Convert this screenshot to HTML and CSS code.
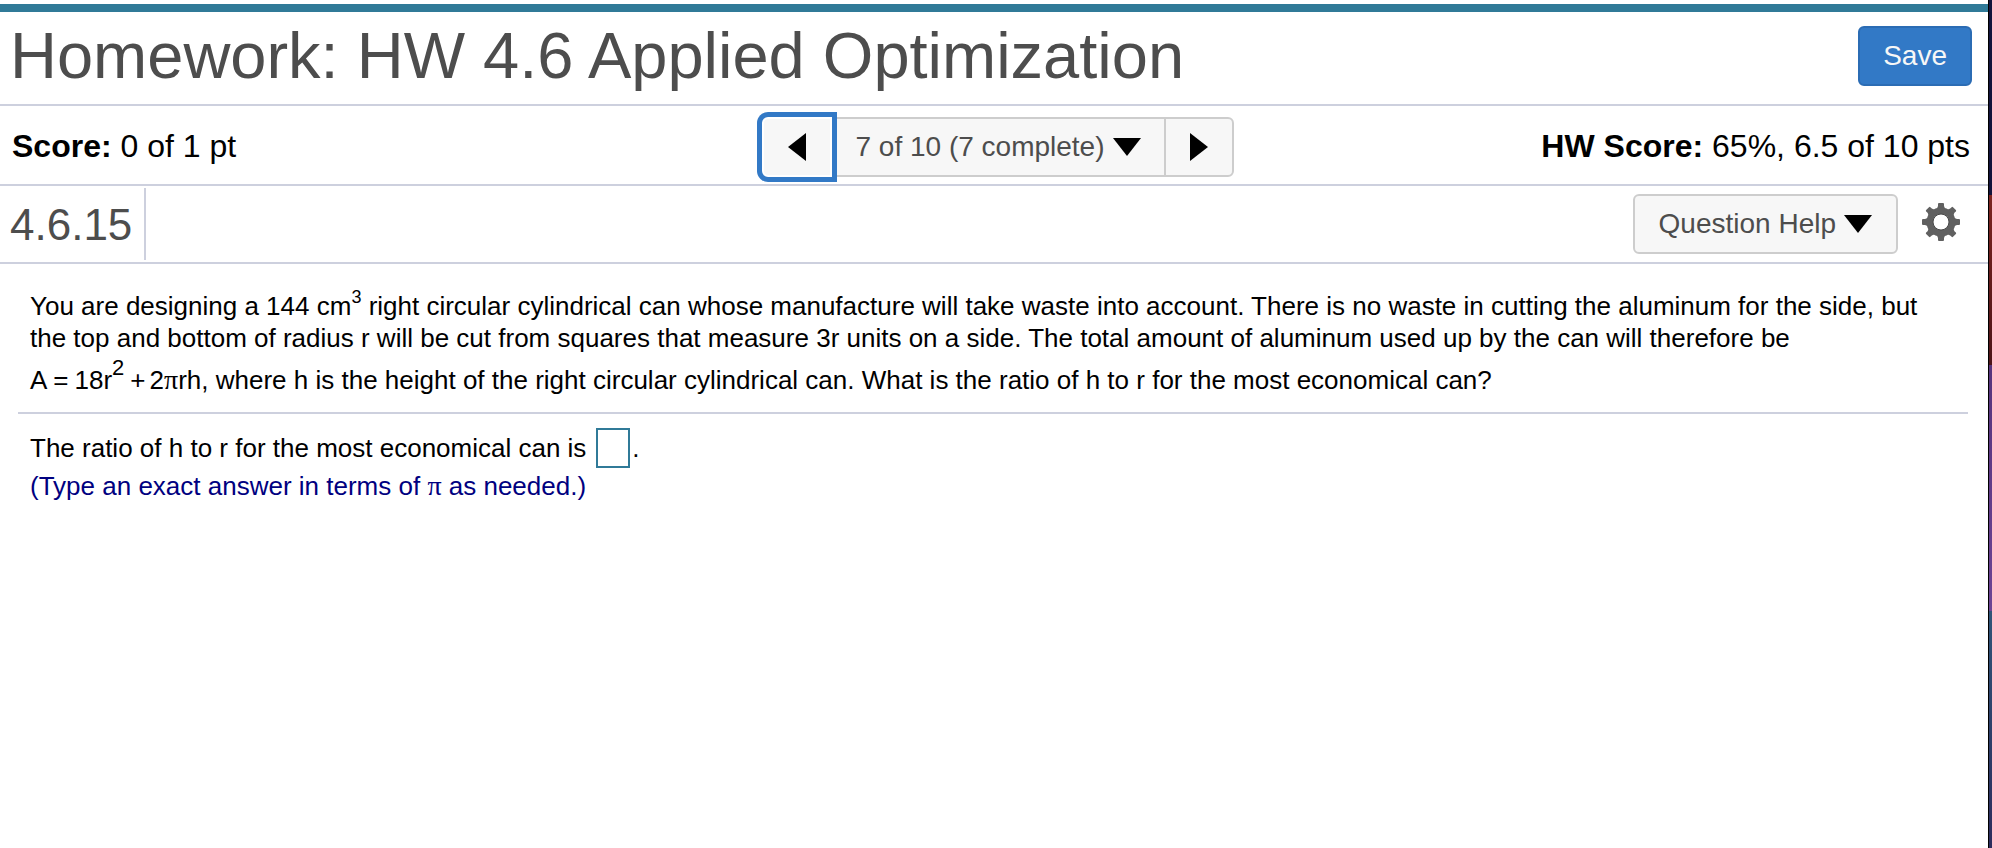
FILE: index.html
```html
<!DOCTYPE html>
<html lang="en">
<head>
	<meta charset="UTF-8">
	<title>Homework: HW 4.6 Applied Optimization</title>
	<link rel="stylesheet" href="styles.css">
</head>
<body>
	<div class="page">
		<header class="title-bar">
			<h1>Homework: HW 4.6 Applied Optimization</h1>
			<button type="button" class="btn btn-save">Save</button>
		</header>

		<div class="score-bar">
			<div class="score"><b>Score:</b> 0 of 1 pt</div>
			<nav class="pager" aria-label="Questions">
				<button type="button" class="btn prev" aria-label="Previous question">
					<svg width="18" height="28" viewBox="0 0 18 28"><path d="M18 0v28L0 14z"/></svg>
				</button>
				<button type="button" class="btn current">7 of 10 (7 complete)
					<svg width="28" height="18" viewBox="0 0 28 18"><path d="M0 0h28L14 18z"/></svg>
				</button>
				<button type="button" class="btn next" aria-label="Next question">
					<svg width="18" height="28" viewBox="0 0 18 28"><path d="M0 0v28l18-14z"/></svg>
				</button>
			</nav>
			<div class="score hw-score"><b>HW Score:</b> 65%, 6.5 of 10 pts</div>
		</div>

		<div class="question-bar">
			<h2>4.6.15</h2>
			<div class="tools">
				<button type="button" class="btn help">Question Help
					<svg width="28" height="18" viewBox="0 0 28 18"><path d="M0 0h28L14 18z"/></svg>
				</button>
				<button type="button" class="settings" aria-label="Settings">
					<svg width="38" height="38" viewBox="-19 -19 38 38">
						<defs>
							<path id="tooth" d="M-5 -11L-3 -16V-18Q-3 -19 -2 -19H2Q3 -19 3 -18V-16L5 -11z"/>
						</defs>
						<g fill="#606060">
							<use href="#tooth"/>
							<use href="#tooth" transform="rotate(45)"/>
							<use href="#tooth" transform="rotate(90)"/>
							<use href="#tooth" transform="rotate(135)"/>
							<use href="#tooth" transform="rotate(180)"/>
							<use href="#tooth" transform="rotate(225)"/>
							<use href="#tooth" transform="rotate(270)"/>
							<use href="#tooth" transform="rotate(315)"/>
						</g>
						<circle r="11" fill="none" stroke="#606060" stroke-width="7"/>
						<circle r="8" fill="#fff" stroke="#484848"/>
					</svg>
				</button>
			</div>
		</div>

		<main class="content">
			<p class="question">You are designing a 144 cm<sup>3</sup> right circular cylindrical can whose manufacture will take waste into account. There is no waste in cutting the aluminum for the side, but the top and bottom of radius r will be cut from squares that measure 3r units on a side. The total amount of aluminum used up by the can will therefore be<br>
			<span class="math">A<i class="op">=</i>18r<sup>2</sup><i class="op plus">+</i>2<i class="pi">π</i>rh</span>, where h is the height of the right circular cylindrical can. What is the ratio of h to r for the most economical can?</p>
			<hr>
			<div class="answer">
				<label for="ratio">The ratio of h to r for the most economical can is</label>
				<input type="text" id="ratio"><span>.</span>
			</div>
			<p class="hint">(Type an exact answer in terms of <i class="pi">π</i> as needed.)</p>
		</main>
	</div>
	<div class="desktop-edge"></div>
</body>
</html>
```

FILE: styles.css
```css
* {
	box-sizing: border-box;
}
body {
	margin: 0;
	display: flex;
	min-height: 100vh;
	background: #fff;
	color: #000;
	font-family: "Liberation Sans", Arial, sans-serif;
}
.page {
	flex: 1;
	padding-top: 4px;
}
/* strip of wallpaper beside the window */
.desktop-edge {
	width: 4px;
	border-left: 1px solid #000;
	background: linear-gradient(#12143c 0, #12123a 23%, #7c2420 23%, #4c1418 43%, #56347c 43%, #6c4494 72%, #305478 72%, #2c2c5c 100%);
}

h1, h2, p {
	margin: 0;
	font-weight: normal;
}
.title-bar, .score-bar, .question-bar {
	display: flex;
	align-items: center;
	justify-content: space-between;
	border-bottom: 2px solid #cdd0de;
}
.title-bar {
	height: 102px;
	padding: 0 16px 4px 10px;
	border-top: 8px solid #307a98;
}
h1 {
	color: #4d4d4d;
	font-size: 65px;
	line-height: 72px;
}

.btn {
	height: 60px;
	border: 2px solid #cdcdcd;
	border-radius: 6px;
	background: #f7f7f7;
	color: #4d4d4d;
	font-family: inherit;
	font-size: 28px;
	line-height: 32px;
}
.btn svg {
	fill: #000;
}
.btn-save {
	padding: 0 23px;
	border-color: #2b6cb4;
	background: #3279c6;
	color: #f7f7f7;
}

.score-bar {
	display: grid;
	grid-template-columns: 1fr auto 1fr;
	height: 80px;
	padding: 3px 18px 0 12px;
}
.score {
	font-size: 32px;
}
.hw-score {
	text-align: right;
}
.pager {
	display: flex;
	margin-left: 14px;
}
.pager .btn {
	display: flex;
	align-items: center;
	justify-content: center;
}
.pager .prev {
	width: 70px;
	border-color: #fff;
	border-radius: 6px 0 0 6px;
	outline: 0;
	box-shadow: 0 0 0 5px #3279c6;
	z-index: 1;
}
.pager .current {
	gap: 8px;
	padding: 0 23px;
	border-width: 2px 0;
	border-radius: 0;
}
.pager .next {
	width: 70px;
	border-radius: 0 6px 6px 0;
}

.question-bar {
	height: 78px;
	padding-right: 24px;
}
h2 {
	height: 72px;
	padding: 0 12px 0 10px;
	border-right: 2px solid #cdd0de;
	color: #4d4d4d;
	font-size: 44px;
	line-height: 74px;
}
.tools {
	display: flex;
	align-items: center;
	gap: 24px;
}
.help {
	display: flex;
	align-items: center;
	gap: 8px;
	padding: 0 24px;
}
.settings {
	display: flex;
	padding: 0 4px 4px 0;
	border: 0;
	background: none;
}

.content {
	padding: 26px 20px 0 18px;
	font-size: 26px;
	line-height: 32px;
}
.question, .answer, .hint {
	padding: 0 12px;
}
sup {
	position: relative;
	bottom: 12px;
	font-size: 18px;
	line-height: 1;
	vertical-align: baseline;
}
.math {
	display: inline-block;
	padding-top: 10px;
}
.math sup {
	bottom: 14px;
	font-size: 22px;
}
.op {
	margin: 0 6px;
	font-style: normal;
}
.plus {
	margin-right: 4px;
}
.pi {
	font-family: "Liberation Serif", "Times New Roman", serif;
	font-size: 28px;
	font-style: normal;
	line-height: 1;
}
hr {
	margin: 16px 0 14px;
	border: 0;
	border-top: 2px solid #cdd0de;
}
.answer {
	display: flex;
	align-items: center;
}
.answer input {
	width: 34px;
	height: 40px;
	margin: 0 2px 0 10px;
	padding: 0 4px;
	border: 2px solid #307a98;
	font: inherit;
}
.hint {
	padding-top: 2px;
	color: #000080;
}
```
